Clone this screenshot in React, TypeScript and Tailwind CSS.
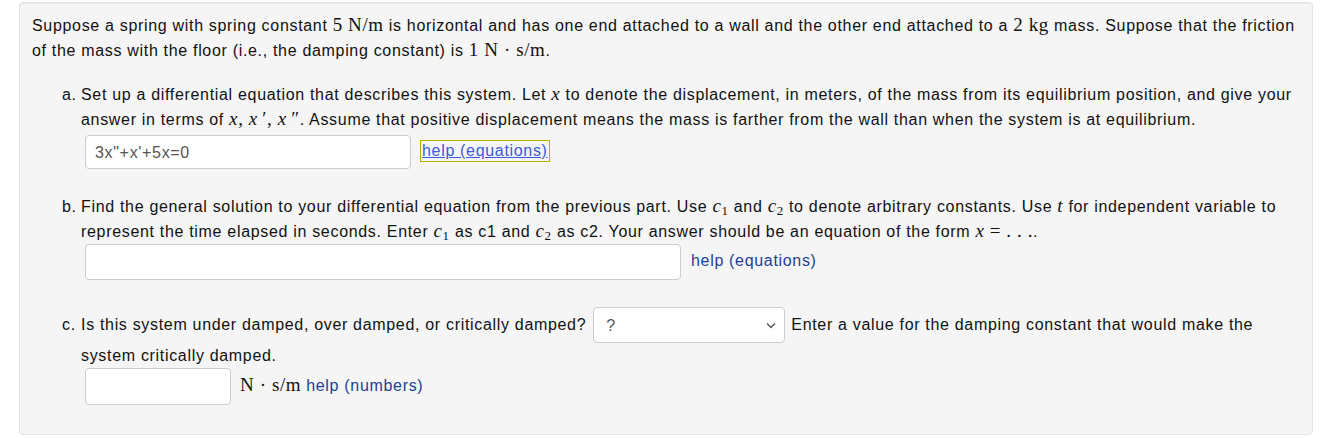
import React from "react";

const M = ({ children, i = false }: { children: React.ReactNode; i?: boolean }) => (
  <span
    className={`text-[19px] leading-none tracking-[0.6px] ${i ? "italic" : ""}`}
    style={{ fontFamily: '"Liberation Serif", "DejaVu Serif", serif' }}
  >
    {children}
  </span>
);

const Sub = ({ children }: { children: React.ReactNode }) => (
  <sub className="text-[13px] leading-none" style={{ fontFamily: '"Liberation Serif", serif' }}>
    {children}
  </sub>
);

export default function App() {
  return (
    <div
      className="bg-white w-[1329px] h-[438px] pt-[2px] text-[16px] leading-[25px] tracking-[0.68px] text-[#111]"
      style={{ fontFamily: '"Liberation Sans", Arial, sans-serif' }}
    >
      <div className="mx-[19px] w-[1294px] h-[433px] border border-[#e3e3e3] rounded-[4px] bg-[#f5f5f5] px-[12px] pt-[10px] shadow-[inset_0_1px_1px_rgba(0,0,0,0.05)]">
        <div className="whitespace-nowrap">
          <div>
            Suppose a spring with spring constant <M>5&nbsp;N/m</M> is horizontal and has one end attached to a wall and the other end attached to a <M>2&nbsp;kg</M> mass. Suppose that the friction
          </div>
          <div>
            of the mass with the floor (i.e., the damping constant) is <M>1&nbsp;N&nbsp;·&nbsp;s/m</M>.
          </div>
        </div>

        <div className="mt-[19px] pl-[30px]">
          {/* a */}
          <div className="flex">
            <span className="w-[19px] shrink-0">a.</span>
            <div className="whitespace-nowrap">
              <div>
                Set up a differential equation that describes this system. Let <M i>x</M> to denote the displacement, in meters, of the mass from its equilibrium position, and give your
              </div>
              <div>
                answer in terms of <M i>x</M><M>, </M><M i>x</M><M>&thinsp;′, </M><M i>x</M><M>&thinsp;″</M>. Assume that positive displacement means the mass is farther from the wall than when the system is at equilibrium.
              </div>
              <div className="flex items-center mt-[3px] ml-[4px]">
                <div className="w-[326px] h-[34px] bg-white border border-[#cccccc] rounded-[4px] px-[9px] flex items-center text-[#555]">
                  3x"+x'+5x=0
                </div>
                <a className="ml-[10px] -mt-[3px] text-[#3b5bdb] underline outline outline-1 outline-[#b5b000] leading-[20px] px-[1px]">
                  help (equations)
                </a>
              </div>
            </div>
          </div>

          {/* b */}
          <div className="flex mt-[25px]">
            <span className="w-[19px] shrink-0">b.</span>
            <div className="whitespace-nowrap">
              <div>
                Find the general solution to your differential equation from the previous part. Use <M i>c</M><Sub>1</Sub> and <M i>c</M><Sub>2</Sub> to denote arbitrary constants. Use <M i>t</M> for independent variable to
              </div>
              <div>
                represent the time elapsed in seconds. Enter <M i>c</M><Sub>1</Sub> as c1 and <M i>c</M><Sub>2</Sub> as c2. Your answer should be an equation of the form <M i>x</M> <M>= . . .</M>.
              </div>
              <div className="flex items-center ml-[4px]">
                <div className="w-[596px] h-[36px] bg-white border border-[#cccccc] rounded-[4px]" />
                <a className="ml-[10px] -mt-[3px] text-[#1e3f8f]">help (equations)</a>
              </div>
            </div>
          </div>

          {/* c */}
          <div className="flex mt-[27px]">
            <span className="w-[19px] shrink-0 mt-[5px]">c.</span>
            <div className="whitespace-nowrap">
              <div className="flex items-center h-[36px]">
                <span className="-mt-[1px]">Is this system under damped, over damped, or critically damped?</span>
                <div className="ml-[7px] w-[192px] h-[36px] bg-white border border-[#cccccc] rounded-[4px] flex items-center justify-between pl-[12px] pr-[8px] text-[#555]">
                  <span>?</span>
                  <svg width="10" height="7" viewBox="0 0 10 7" fill="none" stroke="#555" strokeWidth="1.5">
                    <path d="M1 1.5 L5 5.5 L9 1.5" />
                  </svg>
                </div>
                <span className="ml-[6px] -mt-[1px]">Enter a value for the damping constant that would make the</span>
              </div>
              <div>system critically damped.</div>
              <div className="flex items-center ml-[4px]">
                <div className="w-[146px] h-[37px] bg-white border border-[#cccccc] rounded-[4px]" />
                <span className="ml-[9px] -mt-[3px]"><M>N&nbsp;·&nbsp;s/m</M></span>
                <a className="ml-[5px] -mt-[3px] text-[#1e3f8f]">help (numbers)</a>
              </div>
            </div>
          </div>
        </div>
      </div>
    </div>
  );
}
